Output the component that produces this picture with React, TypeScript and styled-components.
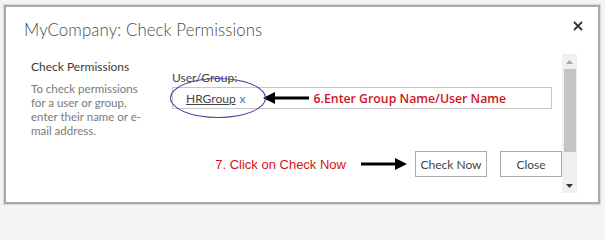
import styled, { createGlobalStyle } from "styled-components";

const GlobalStyle = createGlobalStyle`
  html, body {
    margin: 0;
    padding: 0;
    background: #f4f4f4;
  }
  body {
    font-family: Lato, "Open Sans", sans-serif;
  }
`;

const Page = styled.div`
  width: 605px;
  height: 211px;
  padding: 5px 0 0 4px;
  box-sizing: border-box;
`;

const Dialog = styled.div`
  width: 596px;
  height: 199px;
  box-sizing: border-box;
  background: #fff;
  border: 2px solid #a9a9a9;
  box-shadow: 0 0 1px 1px #d8d8d8;
  display: flex;
  flex-direction: column;
`;

const Header = styled.div`
  height: 47px;
  box-sizing: border-box;
  padding: 11px 13px 0 18px;
  display: flex;
  align-items: flex-start;
  justify-content: space-between;
`;

const Title = styled.h1`
  margin: 0;
  font-family: Lato, sans-serif;
  font-weight: 300;
  font-size: 16.8px;
  line-height: 24px;
  color: #4a4a4a;
  letter-spacing: 0.1px;
`;

const CloseIcon = styled.button`
  border: 0;
  background: none;
  padding: 0;
  margin-top: 1px;
  width: 14px;
  height: 14px;
  display: flex;
  align-items: center;
  justify-content: center;
  cursor: pointer;
`;

const Content = styled.div`
  display: flex;
  height: 139px;
  padding-right: 21px;
`;

const Sidebar = styled.div`
  width: 141px;
  padding: 5px 0 0 25px;
  flex-shrink: 0;
`;

const SideHeading = styled.div`
  font-size: 12px;
  line-height: 16px;
  color: #3a3a3a;
  margin-bottom: 7px;
`;

const SideText = styled.div`
  font-size: 11.5px;
  line-height: 14px;
  color: #7a7a7a;
`;

const Main = styled.div`
  flex: 1;
  padding-top: 16px;
  display: flex;
  flex-direction: column;
`;

const Label = styled.div`
  font-size: 12px;
  line-height: 16px;
  color: #444;
  margin-bottom: 1px;
`;

const InputBox = styled.div`
  height: 22px;
  margin-right: 10px;
  box-sizing: border-box;
  border: 1px solid #c6c6c6;
  display: flex;
  align-items: center;
  padding-left: 13px;
`;

const Chip = styled.span`
  position: relative;
  font-size: 12px;
  color: #444;
  white-space: nowrap;
`;

const ChipName = styled.span`
  text-decoration: underline;
`;

const ChipRemove = styled.span`
  color: #3a78c2;
  margin-left: 4px;
`;

const Ellipse = styled.span`
  position: absolute;
  left: -16px;
  right: -20px;
  top: -13px;
  bottom: -12px;
  border: 1.5px solid #4e3f9c;
  border-radius: 50%;
  pointer-events: none;
`;

const Note = styled.span<{ $geometric?: boolean }>`
  color: #d0141b;
  font-family: ${(p) => (p.$geometric ? '"Open Sans", sans-serif' : '"Liberation Sans", Arial, sans-serif')};
  font-size: ${(p) => (p.$geometric ? "12.3px" : "13px")};
  font-weight: ${(p) => (p.$geometric ? 600 : 400)};
  white-space: nowrap;
`;

const ArrowWrap = styled.span<{ $before?: number; $after?: number }>`
  display: inline-flex;
  margin-left: ${(p) => p.$before ?? 0}px;
  margin-right: ${(p) => p.$after ?? 0}px;
`;

const Actions = styled.div`
  margin-top: 42px;
  display: flex;
  align-items: center;
  justify-content: flex-end;
`;

const Button = styled.button<{ $w: number }>`
  width: ${(p) => p.$w}px;
  height: 26px;
  box-sizing: border-box;
  background: #fff;
  border: 1px solid #ababab;
  font-family: Lato, sans-serif;
  font-size: 12px;
  color: #444;
  padding: 0;
  margin-left: 13px;
  &:first-of-type {
    margin-left: 0;
  }
`;

const Scrollbar = styled.div`
  width: 15px;
  background: #f0f0f0;
  display: flex;
  flex-direction: column;
  align-items: center;
  flex-shrink: 0;
`;

const ScrollArrow = styled.div`
  height: 15px;
  width: 15px;
  display: flex;
  align-items: center;
  justify-content: center;
`;

const Thumb = styled.div`
  width: 12px;
  height: 83px;
  background: #c4c4c4;
`;

const Track = styled.div`
  flex: 1;
`;

const Arrow = ({ dir }: { dir: "left" | "right" }) => (
  <svg width="46" height="12" viewBox="0 0 46 12">
    {dir === "left" ? (
      <>
        <line x1="9" y1="6" x2="46" y2="6" stroke="#000" strokeWidth="3.2" />
        <polygon points="0,6 12,0 12,12" fill="#000" />
      </>
    ) : (
      <>
        <line x1="0" y1="6" x2="37" y2="6" stroke="#000" strokeWidth="3.2" />
        <polygon points="46,6 34,0 34,12" fill="#000" />
      </>
    )}
  </svg>
);

export default function App() {
  return (
    <Page>
      <GlobalStyle />
      <Dialog>
        <Header>
          <Title>MyCompany: Check Permissions</Title>
          <CloseIcon aria-label="Close">
            <svg width="10" height="10" viewBox="0 0 10 10">
              <path d="M1 1 L9 9 M9 1 L1 9" stroke="#333" strokeWidth="1.8" />
            </svg>
          </CloseIcon>
        </Header>
        <Content>
          <Sidebar>
            <SideHeading>Check Permissions</SideHeading>
            <SideText>
              To check permissions
              <br />
              for a user or group,
              <br />
              enter their name or e-
              <br />
              mail address.
            </SideText>
          </Sidebar>
          <Main>
            <Label>User/Group:</Label>
            <InputBox>
              <Chip>
                <ChipName>HRGroup</ChipName>
                <ChipRemove>x</ChipRemove>
                <Ellipse />
              </Chip>
              <ArrowWrap $before={17} $after={5}>
                <Arrow dir="left" />
              </ArrowWrap>
              <Note $geometric>6.Enter Group Name/User Name</Note>
            </InputBox>
            <Actions>
              <Note>7. Click on Check Now</Note>
              <ArrowWrap $before={15} $after={8}>
                <Arrow dir="right" />
              </ArrowWrap>
              <Button $w={72}>Check Now</Button>
              <Button $w={62}>Close</Button>
            </Actions>
          </Main>
          <Scrollbar>
            <ScrollArrow>
              <svg width="7" height="4" viewBox="0 0 7 4">
                <polygon points="0,4 7,4 3.5,0" fill="#a8a8a8" />
              </svg>
            </ScrollArrow>
            <Thumb />
            <Track />
            <ScrollArrow>
              <svg width="7" height="4" viewBox="0 0 7 4">
                <polygon points="0,0 7,0 3.5,4" fill="#333" />
              </svg>
            </ScrollArrow>
          </Scrollbar>
        </Content>
      </Dialog>
    </Page>
  );
}
